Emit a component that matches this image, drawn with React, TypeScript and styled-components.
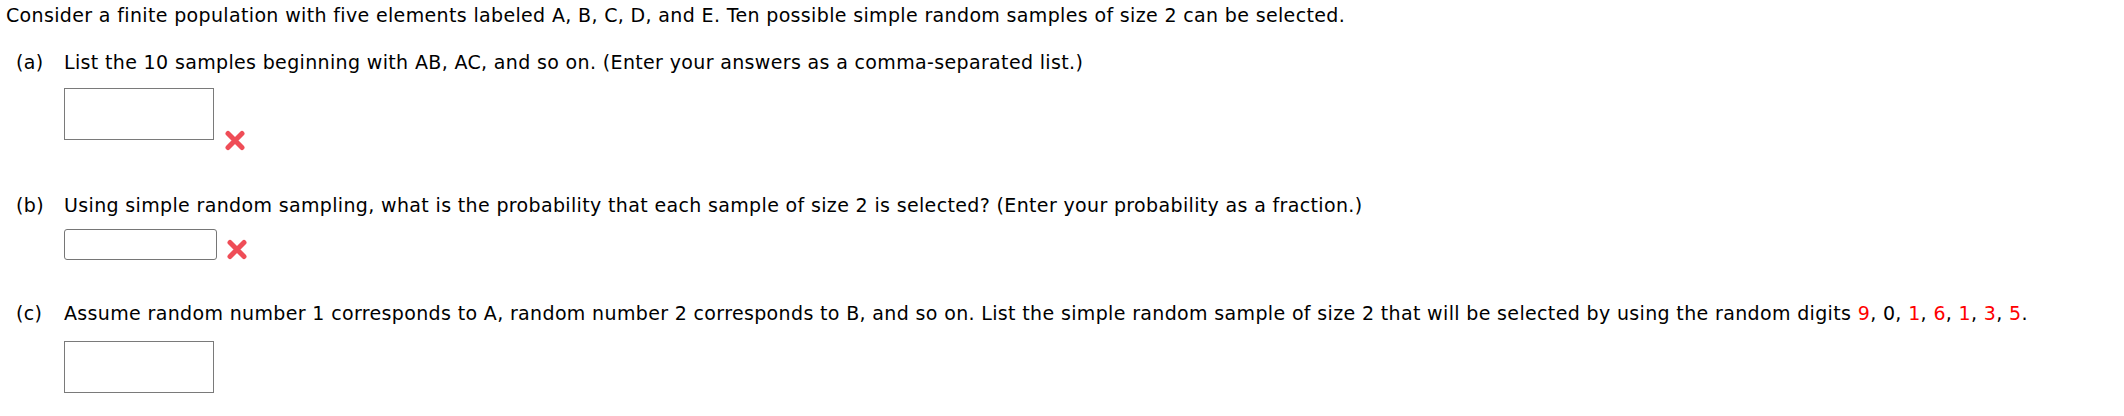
import { createGlobalStyle } from 'styled-components'
import styled from 'styled-components'

const GlobalStyle = createGlobalStyle`
  body {
    margin: 0;
    background: #fff;
    color: #000;
    font-family: Verdana, "DejaVu Sans", sans-serif;
    font-size: 19px;
    letter-spacing: 0.35px;
  }
`

const Page = styled.div`
  padding: 4px 0 0 6px;
`

const Intro = styled.p`
  margin: 0;
  line-height: 22px;
`

const Part = styled.div<{ $top: number }>`
  display: grid;
  grid-template-columns: 48px auto;
  padding-left: 10px;
  margin-top: ${({ $top }) => $top}px;
`

const Label = styled.span`
  line-height: 22px;
`

const Body = styled.div`
  display: flex;
  flex-direction: column;
  align-items: flex-start;
`

const Question = styled.p`
  margin: 0;
  line-height: 22px;
`

const Red = styled.span`
  color: #ff0000;
`

const AnswerRow = styled.div<{ $gap: number }>`
  display: flex;
  align-items: flex-start;
  margin-top: ${({ $gap }) => $gap}px;
`

const BigBox = styled.div`
  width: 150px;
  height: 52px;
  box-sizing: border-box;
  border: 1px solid #7a7a7a;
  background: #fff;
`

const SmallBox = styled.div`
  width: 153px;
  height: 31px;
  box-sizing: border-box;
  border: 1px solid #767676;
  border-radius: 3px;
  background: #fff;
`

const Mark = styled.svg<{ $top: number; $left: number }>`
  display: block;
  margin-top: ${({ $top }) => $top}px;
  margin-left: ${({ $left }) => $left}px;
`

function WrongMark({ top, left }: { top: number; left: number }) {
  return (
    <Mark $top={top} $left={left} width="22" height="21" viewBox="0 0 22 21">
      <path d="M4 3.5 L18 17.5 M18 3.5 L4 17.5" stroke="#ef4d57" strokeWidth="5" strokeLinecap="round" />
    </Mark>
  )
}

export default function App() {
  return (
    <>
      <GlobalStyle />
      <Page>
        <Intro>
          Consider a finite population with five elements labeled A, B, C, D, and E. Ten possible simple random
          samples of size 2 can be selected.
        </Intro>

        <Part $top={25}>
          <Label>(a)</Label>
          <Body>
            <Question>
              List the 10 samples beginning with AB, AC, and so on. (Enter your answers as a comma-separated list.)
            </Question>
            <AnswerRow $gap={15}>
              <BigBox />
              <WrongMark top={42} left={10} />
            </AnswerRow>
          </Body>
        </Part>

        <Part $top={43}>
          <Label>(b)</Label>
          <Body>
            <Question>
              Using simple random sampling, what is the probability that each sample of size 2 is selected? (Enter
              your probability as a fraction.)
            </Question>
            <AnswerRow $gap={13}>
              <SmallBox />
              <WrongMark top={10} left={9} />
            </AnswerRow>
          </Body>
        </Part>

        <Part $top={42}>
          <Label>(c)</Label>
          <Body>
            <Question>
              Assume random number 1 corresponds to A, random number 2 corresponds to B, and so on. List the simple
              random sample of size 2 that will be selected by using the random digits <Red>9</Red>, 0, <Red>1</Red>,{' '}
              <Red>6</Red>, <Red>1</Red>, <Red>3</Red>, <Red>5</Red>.
            </Question>
            <AnswerRow $gap={17}>
              <BigBox />
            </AnswerRow>
          </Body>
        </Part>
      </Page>
    </>
  )
}
